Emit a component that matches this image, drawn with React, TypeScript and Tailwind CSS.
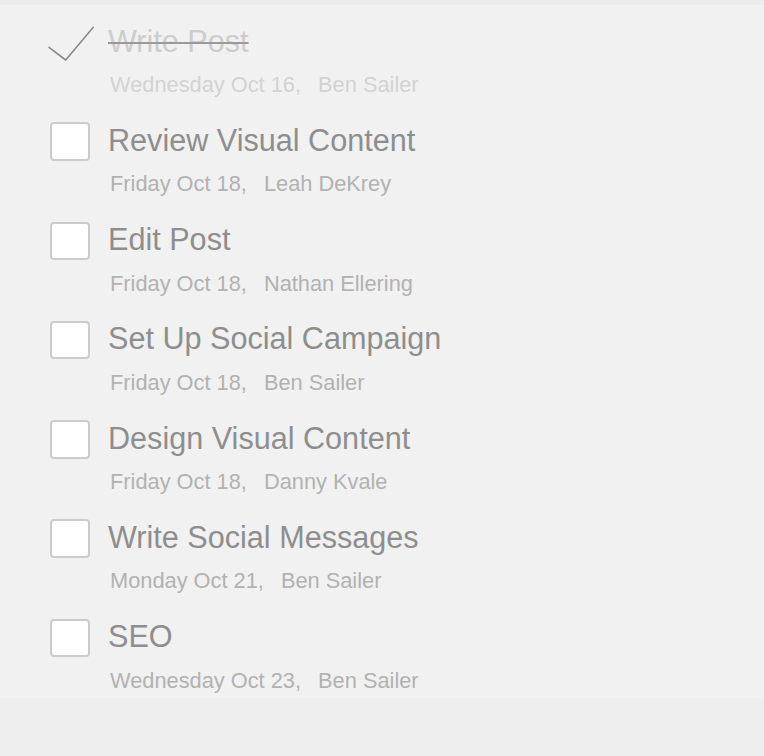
import React from 'react';

type Task = { title: string; date: string; owner: string; done?: boolean };

const tasks: Task[] = [
  { title: 'Write Post', date: 'Wednesday Oct 16,', owner: 'Ben Sailer', done: true },
  { title: 'Review Visual Content', date: 'Friday Oct 18,', owner: 'Leah DeKrey' },
  { title: 'Edit Post', date: 'Friday Oct 18,', owner: 'Nathan Ellering' },
  { title: 'Set Up Social Campaign', date: 'Friday Oct 18,', owner: 'Ben Sailer' },
  { title: 'Design Visual Content', date: 'Friday Oct 18,', owner: 'Danny Kvale' },
  { title: 'Write Social Messages', date: 'Monday Oct 21,', owner: 'Ben Sailer' },
  { title: 'SEO', date: 'Wednesday Oct 23,', owner: 'Ben Sailer' },
];

export default function App() {
  return (
    <div className="h-[756px] w-[764px] bg-[#eeeeee] font-['Liberation_Sans',Arial,sans-serif]">
      <div className="h-[5px] bg-[#ebebeb]" />
      <ul className="flex flex-col gap-[24.8px] bg-[#f1f1f1] pb-[5px] pl-[50px] pt-[17.5px]">
        {tasks.map((t) => (
          <li key={t.title}>
            <TaskRow task={t} />
          </li>
        ))}
      </ul>
    </div>
  );
}

function TaskRow({ task }: { task: Task }) {
  return (
    <div className="flex items-start">
      <div className="relative mt-[0.5px] h-[38.5px] w-[39.5px] shrink-0">
        {task.done ? (
          <svg viewBox="0 0 39 38" width="39" height="38" className="overflow-visible" aria-hidden>
            <polyline
              points="-1,24.3 15.7,37 43.3,4.3"
              fill="none"
              stroke="#8a8a8a"
              strokeWidth="1.6"
              strokeLinecap="round"
              strokeLinejoin="round"
            />
          </svg>
        ) : (
          <div className="h-full w-full rounded-[4px] border-2 border-[#cbcbcb] bg-white" />
        )}
      </div>
      <div className="ml-[18.5px] min-w-0">
        <p
          className={`text-[30.6px] leading-[36px] ${
            task.done ? 'text-[#cdcdcd] line-through decoration-[#9a9a9a] decoration-[1.5px]' : 'text-[#8e8e8e]'
          }`}
        >
          {task.title}
        </p>
        <p
          className={`mt-[14.5px] pl-[2px] text-[21.8px] leading-[24px] ${
            task.done ? 'text-[#d3d3d3]' : 'text-[#b2b2b2]'
          }`}
        >
          {task.date}
          <span className="ml-[17px]">{task.owner}</span>
        </p>
      </div>
    </div>
  );
}
